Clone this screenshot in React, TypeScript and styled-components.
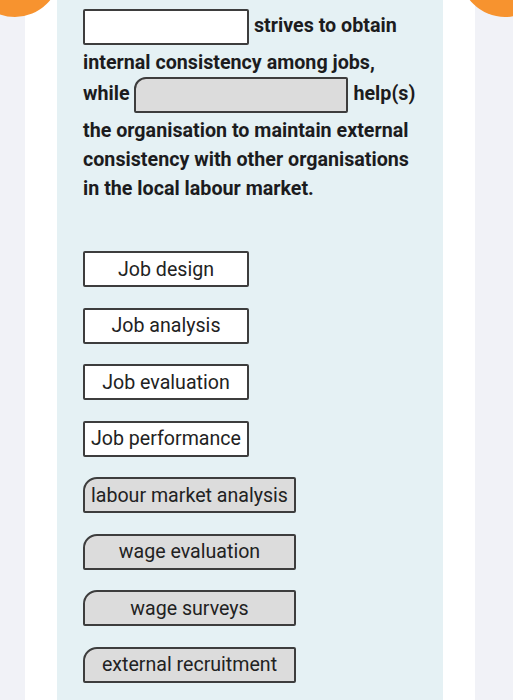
import styled, { createGlobalStyle } from "styled-components";

const GlobalStyle = createGlobalStyle`
  html, body {
    margin: 0;
    padding: 0;
    background: #f1f2f7;
    font-family: Roboto, "Noto Sans", "Liberation Sans", sans-serif;
  }
`;

const Page = styled.div`
  position: relative;
  display: flex;
  height: 700px;
  overflow: hidden;
`;

const Gutter = styled.div<{ w: number; bg: string }>`
  flex: 0 0 ${(p) => p.w}px;
  background: ${(p) => p.bg};
`;

const Panel = styled.div`
  flex: 0 0 386px;
  background: #e5f1f4;
  padding: 9px 26px 0;
  box-sizing: border-box;
`;

const Blob = styled.div<{ left: number }>`
  position: absolute;
  top: -73px;
  left: ${(p) => p.left}px;
  width: 90px;
  height: 90px;
  border-radius: 50%;
  background: #f7932f;
`;

const Question = styled.p`
  margin: 0;
  font-size: 19.7px;
  font-weight: 700;
  line-height: 29px;
  color: #1c1c1e;
`;

const Blank = styled.span<{ filled?: boolean; w: number }>`
  display: inline-block;
  vertical-align: middle;
  box-sizing: border-box;
  width: ${(p) => p.w}px;
  height: 36px;
  margin: 0 5px 0 0;
  border: 2px solid #3d3d3d;
  border-radius: ${(p) => (p.filled ? "12px 2px 2px 2px" : "2px")};
  background: ${(p) => (p.filled ? "#dcdcdc" : "#ffffff")};
`;

const Line = styled.span<{ gap?: number }>`
  display: block;
  margin-bottom: ${(p) => p.gap ?? 0}px;
`;

const Options = styled.div`
  display: flex;
  flex-direction: column;
  align-items: flex-start;
  gap: 20.5px;
  margin-top: 48px;
`;

const Option = styled.div<{ grey?: boolean }>`
  box-sizing: border-box;
  width: ${(p) => (p.grey ? 213 : 166)}px;
  height: 36px;
  display: flex;
  align-items: center;
  justify-content: center;
  white-space: nowrap;
  border: 2px solid #3d3d3d;
  border-radius: ${(p) => (p.grey ? "14px 2px 2px 2px" : "2px")};
  background: ${(p) => (p.grey ? "#dcdcdc" : "#ffffff")};
  font-size: 19.6px;
  color: #222;
`;

const jobs = ["Job design", "Job analysis", "Job evaluation", "Job performance"];
const market = [
  "labour market analysis",
  "wage evaluation",
  "wage surveys",
  "external recruitment",
];

export default function App() {
  return (
    <>
      <GlobalStyle />
      <Page>
        <Gutter w={25} bg="#f1f2f7" />
        <Gutter w={32} bg="#ffffff" />
        <Panel>
          <Question>
            <Line gap={3}>
              <Blank w={166} />
              strives to obtain
            </Line>
            <Line gap={0}>internal consistency among jobs,</Line>
            <Line gap={3}>
              while <Blank filled w={214} />
              help(s)
            </Line>
            <Line>the organisation to maintain external</Line>
            <Line>consistency with other organisations</Line>
            <Line>in the local labour market.</Line>
          </Question>
          <Options>
            {jobs.map((j) => (
              <Option key={j}>{j}</Option>
            ))}
            {market.map((m) => (
              <Option key={m} grey>
                {m}
              </Option>
            ))}
          </Options>
        </Panel>
        <Gutter w={32} bg="#ffffff" />
        <Gutter w={38} bg="#f1f2f7" />
        <Blob left={-30} />
        <Blob left={460} />
      </Page>
    </>
  );
}
